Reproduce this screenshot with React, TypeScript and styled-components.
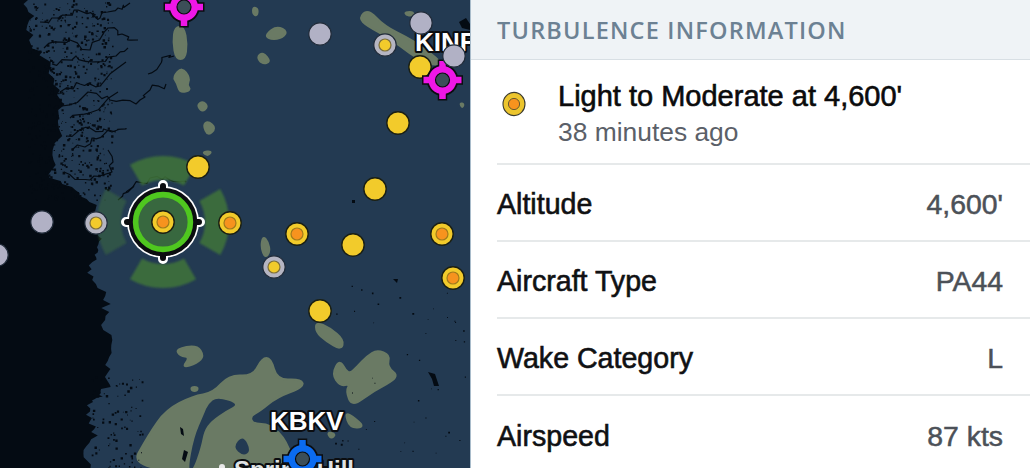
import React, { FC } from 'react';
import styled, { createGlobalStyle } from 'styled-components';

const Global = createGlobalStyle`
  html, body { margin: 0; padding: 0; background: #fff; overflow: hidden; }
  * { box-sizing: border-box; }
`;

const Page = styled.div`
  display: flex;
  width: 1030px;
  height: 468px;
  overflow: hidden;
  font-family: 'Liberation Sans', Arial, sans-serif;
`;

const MapPane = styled.div`
  flex: 0 0 470px;
  height: 468px;
  overflow: hidden;
  background: #233a52;
`;

const MapSvg = styled.svg`
  display: block;
`;

const MapLabel = styled.text<{ $size?: number; $color?: string }>`
  font-family: 'Liberation Sans', Arial, sans-serif;
  font-weight: 700;
  font-size: ${p => p.$size ?? 26}px;
  fill: ${p => p.$color ?? '#fff'};
  stroke: #0b0d10;
  stroke-width: 4px;
  stroke-linejoin: round;
  paint-order: stroke fill;
`;

const Panel = styled.div`
  flex: 1;
  display: flex;
  flex-direction: column;
  border-left: 1px solid #a9bccb;
  background: #fff;
`;

const Header = styled.div`
  flex: 0 0 60px;
  display: flex;
  align-items: center;
  padding: 0 0 0 26px;
  background: #eff3f6;
  border-bottom: 1px solid #d8dfe4;
  color: #6c8193;
  font-family: 'Open Sans', sans-serif;
  font-weight: 600;
  font-size: 23.5px;
  letter-spacing: 1.2px;
`;

const Summary = styled.div`
  flex: 0 0 105px;
  display: flex;
  align-items: center;
  gap: 32px;
  margin-left: 26px;
  padding-left: 5px;
  border-bottom: 2px solid #e6e9ea;
`;

const IconWrap = styled.div`
  display: flex;
  margin-bottom: 15px;
`;

const SummaryText = styled.div`
  display: flex;
  flex-direction: column;
  gap: 6px;
  padding-top: 5px;
`;

const Title = styled.div`
  color: #0b0b0c;
  font-size: 29px;
  line-height: 30px;
  -webkit-text-stroke: 0.6px #0b0b0c;
`;

const Age = styled.div`
  color: #5b6068;
  font-size: 26.4px;
  line-height: 30px;
`;

const Row = styled.div<{ $last?: boolean }>`
  flex: 0 0 77px;
  display: flex;
  align-items: center;
  justify-content: space-between;
  margin-left: 26px;
  padding: 4px 27px 0 0;
  border-bottom: ${p => (p.$last ? 'none' : '2px solid #e6e9ea')};
`;

const RowLabel = styled.span`
  color: #101113;
  font-size: 28.6px;
  -webkit-text-stroke: 0.6px #101113;
`;

const RowValue = styled.span`
  color: #4c5158;
  font-size: 28.4px;
  -webkit-text-stroke: 0.5px #4c5158;
`;

const LAND = '#6a7a64';
const DARK = '#040b13';
const WATER = '#233a52';

const Dot: FC<{ x: number; y: number }> = ({ x, y }) => (
  <circle cx={x} cy={y} r={11.2} fill="#f2cb2b" stroke="#1a1f14" strokeWidth={1.4} />
);

const GreyDot: FC<{ x: number; y: number }> = ({ x, y }) => (
  <circle cx={x} cy={y} r={11.2} fill="#b1b1c5" stroke="#1f2a38" strokeWidth={1.2} />
);

const Ringed: FC<{ x: number; y: number }> = ({ x, y }) => (
  <g>
    <circle cx={x} cy={y} r={11.2} fill="#f2cb2b" stroke="#1a1f14" strokeWidth={1.4} />
    <circle cx={x} cy={y} r={6} fill="#f7931e" stroke="#a07a1c" strokeWidth={1.2} />
  </g>
);

const GreyRinged: FC<{ x: number; y: number }> = ({ x, y }) => (
  <g>
    <circle cx={x} cy={y} r={11.2} fill="#b5b5c2" stroke="#1f2a38" strokeWidth={1.2} />
    <circle cx={x} cy={y} r={6} fill="#f2cb2b" stroke="#7d6f3a" strokeWidth={1.2} />
  </g>
);

const Airport: FC<{ x: number; y: number; color: string }> = ({ x, y, color }) => (
  <g>
    <path d={`M${x} ${y - 20.5}V${y + 20.5}M${x - 20.5} ${y}H${x + 20.5}`} stroke="#0b0d10" strokeWidth={9.5} />
    <circle cx={x} cy={y} r={15.8} fill="#0b0d10" />
    <path d={`M${x} ${y - 19}V${y + 19}M${x - 19} ${y}H${x + 19}`} stroke={color} strokeWidth={6.5} />
    <circle cx={x} cy={y} r={10.5} fill="none" stroke={color} strokeWidth={7} />
    <circle cx={x} cy={y} r={7} fill="#3c4e58" stroke="#0b0d10" strokeWidth={1.2} />
  </g>
);

// sector of the ring round the selected report, angles in degrees from north
const sector = (cx: number, cy: number, r1: number, r2: number, a1: number, a2: number) => {
  const pt = (r: number, a: number) => {
    const t = ((a - 90) * Math.PI) / 180;
    return `${(cx + r * Math.cos(t)).toFixed(1)} ${(cy + r * Math.sin(t)).toFixed(1)}`;
  };
  return `M${pt(r1, a1)}A${r1} ${r1} 0 0 1 ${pt(r1, a2)}L${pt(r2, a2)}A${r2} ${r2} 0 0 0 ${pt(r2, a1)}Z`;
};

// rounds a rough outline through the midpoints of its sides
const blob = (pts: number[]) => {
  const p: [number, number][] = [];
  for (let i = 0; i < pts.length; i += 2) p.push([pts[i], pts[i + 1]]);
  const mid = (a: [number, number], b: [number, number]) => `${(a[0] + b[0]) / 2} ${(a[1] + b[1]) / 2}`;
  let d = `M${mid(p[p.length - 1], p[0])}`;
  p.forEach((c, i) => {
    d += `Q${c[0]} ${c[1]} ${mid(c, p[(i + 1) % p.length])}`;
  });
  return d + 'Z';
};

// seeded so each run draws the same coast
const rand = (() => {
  let s = 1234;
  return () => {
    s = (s * 16807) % 2147483647;
    return s / 2147483647;
  };
})();

const coastEdge: [number, number][] = [
  [28, 0], [30, 20], [32, 45], [46, 62], [60, 90], [62, 115], [55, 150], [50, 175], [72, 190],
  [92, 205], [98, 236], [100, 250], [90, 262], [92, 280], [108, 300], [103, 320], [112, 345],
  [106, 365], [110, 385], [100, 395], [92, 402], [90, 418], [95, 432], [88, 450], [86, 468],
];

const coastPath = () => {
  let d = 'M0 0';
  coastEdge.forEach(([x, y], i) => {
    if (i === 0) {
      d += `L${x} ${y}`;
      return;
    }
    const [px, py] = coastEdge[i - 1];
    for (let k = 1; k <= 5; k++) {
      const f = k / 5;
      d += `L${(px + (x - px) * f + (rand() - 0.5) * 10).toFixed(1)} ${(py + (y - py) * f).toFixed(1)}`;
    }
  });
  return d + 'L0 468Z';
};

const speckles = (n: number, x0: number, x1: number, y0: number, y1: number, size: number) => {
  let d = '';
  for (let i = 0; i < n; i++) {
    const x = x0 + rand() * (x1 - x0);
    const y = y0 + rand() * (y1 - y0);
    const s = 0.7 + rand() * size;
    d += `M${x.toFixed(1)} ${y.toFixed(1)}h${s.toFixed(1)}v${s.toFixed(1)}h${(-s).toFixed(1)}Z`;
  }
  return d;
};

// wobbly creek between rough points
const creek = (pts: number[]) => {
  let d = `M${pts[0]} ${pts[1]}`;
  for (let i = 2; i < pts.length; i += 2) {
    const px = pts[i - 2];
    const py = pts[i - 1];
    const steps = 4;
    for (let k = 1; k <= steps; k++) {
      const f = k / steps;
      const jx = k === steps ? 0 : (rand() - 0.5) * 7;
      const jy = k === steps ? 0 : (rand() - 0.5) * 7;
      d += `L${(px + (pts[i] - px) * f + jx).toFixed(1)} ${(py + (pts[i + 1] - py) * f + jy).toFixed(1)}`;
    }
  }
  return d;
};

const creeks = [
  [40, 22, 60, 18, 78, 10, 100, 18, 118, 8, 130, 3],
  [44, 48, 70, 40, 90, 50, 108, 28, 122, 34, 138, 40],
  [52, 64, 76, 56, 92, 62, 116, 56, 128, 48],
  [60, 92, 80, 84, 100, 86, 126, 62],
  [62, 106, 88, 92, 110, 100, 136, 104, 150, 90, 166, 84],
  [70, 118, 92, 112, 118, 92],
  [66, 136, 90, 128, 112, 132, 126, 128],
  [72, 150, 92, 138, 116, 132],
  [64, 172, 90, 180, 112, 172, 108, 150],
  [148, 74, 162, 60, 174, 56],
  [126, 192, 150, 178, 170, 180, 186, 182],
  [118, 200, 134, 186],
];

const lands = [
  [175, 27, 184, 27, 187, 44, 185, 59, 176, 59, 173, 42],
  [173, 77, 182, 67, 190, 78, 187, 85, 191, 90, 180, 93, 177, 83],
  [197, 105, 203, 101, 208, 107, 202, 112],
  [203, 125, 208, 121, 216, 128, 208, 136],
  [202, 152, 212, 151, 208, 156],
  [253, 7, 258, 9, 257, 16, 253, 14],
  [266, 34, 277, 26, 288, 32, 280, 39, 268, 39],
  [257, 57, 263, 52, 271, 62, 262, 64],
  [359, 18, 368, 9, 384, 26, 410, 39, 428, 51, 443, 64, 430, 65, 410, 54, 390, 38, 367, 26],
  [405, 12, 414, 12, 412, 16, 406, 15],
  [460, 103, 464, 104, 462, 108],
  [263, 236, 268, 242, 270, 252, 265, 258, 261, 247],
  [316, 322, 330, 328, 344, 340, 341, 350, 326, 341, 316, 332],
  [176, 349, 197, 345, 204, 356, 197, 363, 182, 368, 190, 357, 180, 356],
  [340, 359, 348, 375, 357, 367, 367, 356, 377, 350, 390, 355, 387, 367, 400, 377, 373, 391, 352, 407, 346, 391, 350, 384, 340, 386, 332, 374],
  [128, 472, 149, 434, 166, 410, 193, 396, 213, 393, 229, 375, 253, 376, 262, 358, 271, 358, 277, 380, 301, 379, 304, 387, 277, 397, 260, 411, 250, 416, 253, 424, 270, 424, 287, 441, 296, 472],
  [345, 413, 352, 416, 365, 427, 350, 428],
  [191, 387, 198, 387, 197, 391, 192, 391],
  [327, 432, 336, 434, 331, 439],
];

const lakes = [
  [217, 397, 239, 404, 227, 410, 211, 421, 204, 431, 201, 447, 193, 470, 188, 470, 194, 437, 204, 414, 208, 404],
  [243, 435, 251, 451, 243, 456, 233, 447],
];

const Map: FC = () => (
  <MapSvg width={470} height={468} viewBox="0 0 470 468">
    <defs>
      <filter id="soft" x="-10%" y="-10%" width="120%" height="120%">
        <feGaussianBlur stdDeviation="1" />
      </filter>
    </defs>
    <rect width={470} height={468} fill={WATER} />

    <g fill={LAND} stroke={LAND} strokeWidth={2}>
      {lands.map((pts, i) => (
        <path d={blob(pts)} key={i} />
      ))}
    </g>
    <g fill={WATER}>
      {lakes.map((pts, i) => (
        <path d={blob(pts)} key={i} />
      ))}
    </g>

    {/* dark coast */}
    <path d={coastPath()} fill={DARK} />
    <path d={speckles(620, 28, 112, 0, 200, 1.9)} fill={DARK} />
    <path d={speckles(90, 90, 142, 375, 468, 1.8)} fill={DARK} />
    <path d={speckles(45, 330, 470, 275, 468, 1.3)} fill={DARK} />
    <g fill="none" stroke={DARK} strokeWidth={1.2} strokeLinejoin="round">
      {creeks.map((pts, i) => (
        <path d={creek(pts)} key={i} />
      ))}
    </g>
    <g fill={DARK}>
      <path d="M428 372L435 374L439 386L434 386L432 379Z" />
      <path d="M393 279L398 279L397 283Z" />
      <path d="M459 22L466 18L470 24V30L462 28Z" />
      <path d="M352 200h3v3h-3Z" />
      <path d="M180 427l3 2 1 7 -3 -2Z" />
      <path d="M184 450l4 2 -3 10 -3 -3Z" />
    </g>

    {/* wake ring */}
    <g fill="#41743a" fillOpacity={0.85} filter="url(#soft)">
      <path d={sector(163, 222, 42, 66, -30, 30)} />
      <path d={sector(163, 222, 42, 66, 60, 120)} />
      <path d={sector(163, 222, 42, 66, 150, 210)} />
      <path d={sector(163, 222, 42, 66, 240, 300)} fillOpacity={0.45} />
    </g>

    {/* reports */}
    <GreyDot x={320} y={34} />
    <GreyDot x={42} y={222} />
    <GreyDot x={-3} y={255} />
    <GreyRinged x={385} y={45} />
    <GreyRinged x={96} y={223} />
    <GreyRinged x={274} y={267} />
    <Dot x={198} y={167} />
    <Dot x={398} y={123} />
    <Dot x={375} y={189} />
    <Dot x={353} y={245} />
    <Dot x={320} y={311} />
    <Ringed x={230} y={223} />
    <Ringed x={297} y={234} />
    <Ringed x={442} y={234} />
    <Ringed x={453} y={278} />

    {/* selected report */}
    <path d="M163 185V259M126 222H200" stroke="#fff" strokeWidth={10} strokeLinecap="round" />
    <circle cx={163} cy={222} r={36} fill="#fff" />
    <path d="M163 186V258M127 222H199" stroke="#0b0d10" strokeWidth={6} strokeLinecap="round" />
    <circle cx={163} cy={222} r={34.3} fill="#0b0d10" />
    <circle cx={163} cy={222} r={27.4} fill="#38683f" stroke="#4fc71f" strokeWidth={5.6} />
    <Ringed x={163} y={222} />

    <Airport x={184} y={7} color="#ee17e6" />
    <MapLabel x={415} y={51}>KINF</MapLabel>
    <GreyDot x={421} y={23} />
    <Dot x={420} y={67} />
    <Airport x={442.5} y={80} color="#ee17e6" />
    <GreyDot x={454} y={56} />
    <MapLabel x={270} y={430}>KBKV</MapLabel>
    <circle cx={222} cy={467} r={3} fill="#e8e8e8" />
    <MapLabel x={234} y={478} $size={24} $color="#dfe2e4">Spring Hill</MapLabel>
    <Airport x={302.5} y={459} color="#0b6bf0" />
  </MapSvg>
);

const SummaryIcon: FC = () => (
  <svg width={24} height={26} viewBox="0 0 24 26">
    <ellipse cx={12} cy={13} rx={11} ry={11.6} fill="#ecc52d" stroke="#3a3a30" strokeWidth={1.1} />
    <circle cx={12} cy={13} r={5.6} fill="#f7931e" stroke="#6a5a2c" strokeWidth={1} />
  </svg>
);

const rows = [
  { label: 'Altitude', value: "4,600'" },
  { label: 'Aircraft Type', value: 'PA44' },
  { label: 'Wake Category', value: 'L' },
  { label: 'Airspeed', value: '87 kts' },
];

const App: FC = () => (
  <>
    <Global />
    <Page>
      <MapPane>
        <Map />
      </MapPane>
      <Panel>
        <Header>TURBULENCE INFORMATION</Header>
        <Summary>
          <IconWrap>
            <SummaryIcon />
          </IconWrap>
          <SummaryText>
            <Title>Light to Moderate at 4,600'</Title>
            <Age>38 minutes ago</Age>
          </SummaryText>
        </Summary>
        {rows.map((r, i) => (
          <Row key={r.label} $last={i === rows.length - 1}>
            <RowLabel>{r.label}</RowLabel>
            <RowValue>{r.value}</RowValue>
          </Row>
        ))}
      </Panel>
    </Page>
  </>
);

export default App;
